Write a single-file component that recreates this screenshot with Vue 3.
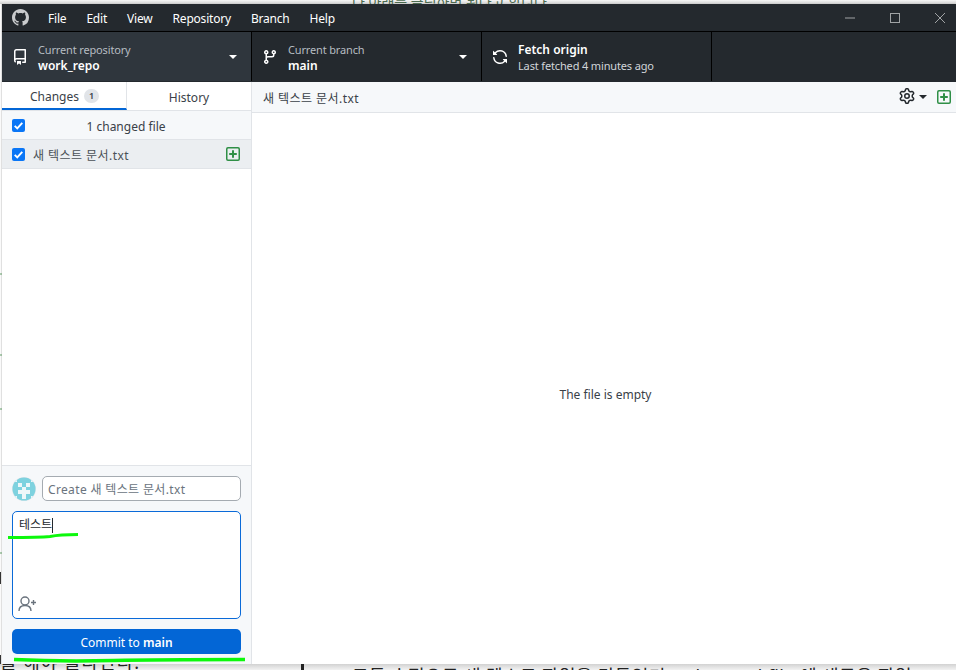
<template>
  <div class="screen">
    <div class="behind-top">
      <span>다 아래를 클릭하면 된다고 합니다</span>
    </div>

    <div class="window">
      <header class="titlebar">
        <svg class="logo" viewBox="0 0 16 16" width="17" height="17">
          <path fill="#c9cbcd" d="M8 0C3.58 0 0 3.58 0 8c0 3.54 2.29 6.53 5.47 7.59.4.07.55-.17.55-.38 0-.19-.01-.82-.01-1.49-2.01.37-2.53-.49-2.69-.94-.09-.23-.48-.94-.82-1.13-.28-.15-.68-.52-.01-.53.63-.01 1.08.58 1.23.82.72 1.21 1.87.87 2.33.66.07-.52.28-.87.51-1.07-1.78-.2-3.64-.89-3.64-3.95 0-.87.31-1.59.82-2.15-.08-.2-.36-1.02.08-2.12 0 0 .67-.21 2.2.82.64-.18 1.32-.27 2-.27s1.36.09 2 .27c1.53-1.04 2.2-.82 2.2-.82.44 1.1.16 1.92.08 2.12.51.56.82 1.27.82 2.15 0 3.07-1.87 3.75-3.65 3.95.29.25.54.73.54 1.48 0 1.07-.01 1.93-.01 2.2 0 .21.15.46.55.38A8.01 8.01 0 0 0 16 8c0-4.42-3.58-8-8-8z"/>
        </svg>
        <nav class="menu">
          <span v-for="item in menuItems" :key="item">{{ item }}</span>
        </nav>
        <div class="win-controls">
          <svg viewBox="0 0 10 10" width="10" height="10"><path d="M0 5h10" stroke="#a0a3a5" fill="none"/></svg>
          <svg viewBox="0 0 10 10" width="10" height="10"><rect x=".5" y=".5" width="9" height="9" stroke="#a0a3a5" fill="none"/></svg>
          <svg viewBox="0 0 10 10" width="10" height="10"><path d="M0 0l10 10M10 0L0 10" stroke="#a0a3a5" fill="none"/></svg>
        </div>
      </header>

      <section class="toolbar">
        <div class="tool repo">
          <svg class="tool-icon" viewBox="0 0 16 16" width="16" height="16">
            <path fill="#fff" d="M2 2.5A2.5 2.5 0 0 1 4.5 0h8.75a.75.75 0 0 1 .75.75v12.5a.75.75 0 0 1-.75.75h-2.5a.75.75 0 0 1 0-1.5h1.75v-2h-8a1 1 0 0 0-.714 1.7.75.75 0 1 1-1.072 1.05A2.495 2.495 0 0 1 2 11.5Zm10.5-1h-8a1 1 0 0 0-1 1v6.708A2.486 2.486 0 0 1 4.5 9h8ZM5 12.25a.25.25 0 0 1 .25-.25h3.5a.25.25 0 0 1 .25.25v3.25a.25.25 0 0 1-.4.2l-1.45-1.087a.249.249 0 0 0-.3 0L5.4 15.7a.25.25 0 0 1-.4-.2Z"/>
          </svg>
          <div class="tool-text">
            <span class="tool-label">Current repository</span>
            <strong>work_repo</strong>
          </div>
          <i class="caret light"></i>
        </div>
        <div class="tool branch">
          <svg class="tool-icon" viewBox="0 0 16 16" width="16" height="16">
            <path fill="#fff" d="M9.5 3.25a2.25 2.25 0 1 1 3 2.122V6A2.5 2.5 0 0 1 10 8.5H6a1 1 0 0 0-1 1v1.128a2.251 2.251 0 1 1-1.5 0V5.372a2.25 2.25 0 1 1 1.5 0v1.836A2.493 2.493 0 0 1 6 7h4a1 1 0 0 0 1-1v-.628A2.25 2.25 0 0 1 9.5 3.25Zm-6 0a.75.75 0 1 0 1.5 0 .75.75 0 0 0-1.5 0Zm8.25-.75a.75.75 0 1 0 0 1.5.75.75 0 0 0 0-1.5ZM4.25 12a.75.75 0 1 0 0 1.5.75.75 0 0 0 0-1.5Z"/>
          </svg>
          <div class="tool-text">
            <span class="tool-label">Current branch</span>
            <strong>main</strong>
          </div>
          <i class="caret light"></i>
        </div>
        <div class="tool fetch">
          <svg class="tool-icon" viewBox="0 0 16 16" width="16" height="16">
            <path fill="#fff" d="M1.705 8.005a.75.75 0 0 1 .834.656 5.5 5.5 0 0 0 9.592 2.97l-1.204-1.204a.25.25 0 0 1 .177-.427h3.646a.25.25 0 0 1 .25.25v3.646a.25.25 0 0 1-.427.177l-1.38-1.38A7.002 7.002 0 0 1 1.05 8.84a.75.75 0 0 1 .656-.834ZM8 2.5a5.487 5.487 0 0 0-4.131 1.869l1.204 1.204A.25.25 0 0 1 4.896 6H1.25A.25.25 0 0 1 1 5.75V2.104a.25.25 0 0 1 .427-.177l1.38 1.38A7.002 7.002 0 0 1 14.95 7.16a.75.75 0 0 1-1.49.178A5.5 5.5 0 0 0 8 2.5Z"/>
          </svg>
          <div class="tool-text">
            <strong class="fetch-title">Fetch origin</strong>
            <span class="tool-label">Last fetched 4 minutes ago</span>
          </div>
        </div>
      </section>

      <main class="body">
        <aside class="sidebar">
          <div class="tabs">
            <div class="tab active"><span class="tab-label">Changes</span> <span class="count">1</span></div>
            <div class="tab"><span class="tab-label">History</span></div>
          </div>
          <div class="changes-head">
            <span class="check"><svg viewBox="0 0 16 16" width="11" height="11"><path d="M2.5 8.5l3.7 3.7 7.3-8" stroke="#fff" stroke-width="2.8" fill="none"/></svg></span>
            <span class="changes-count">1 changed file</span>
          </div>
          <div class="file-row">
            <span class="check"><svg viewBox="0 0 16 16" width="11" height="11"><path d="M2.5 8.5l3.7 3.7 7.3-8" stroke="#fff" stroke-width="2.8" fill="none"/></svg></span>
            <span class="file-name">새 텍스트 문서.txt</span>
            <svg class="added" viewBox="0 0 14 14" width="14" height="14">
              <rect x=".75" y=".75" width="12.5" height="12.5" rx="1.2" fill="none" stroke="#2f8f46" stroke-width="1.5"/>
              <path d="M7 3.2v7.6M3.2 7h7.6" stroke="#2f8f46" stroke-width="2"/>
            </svg>
          </div>
          <div class="file-list"></div>
          <div class="commit">
            <div class="summary-row">
              <svg class="avatar" viewBox="0 0 24 24" width="24" height="24">
                <defs><clipPath id="avatar-clip"><circle cx="12" cy="12" r="11.500"/></clipPath></defs>
                <circle cx="12" cy="12" r="12" fill="#e4e7ea"/>
                <g clip-path="url(#avatar-clip)">
                  <rect width="24" height="24" fill="#7ed2df"/>
                  <path fill="#eef7f9" d="M0 0h5v5H0zM19 0h5v5h-5zM6 6h4v4H6zM14 6h4v4h-4zM10 10h4v3h4v4h-4v5h-4v-5H6v-4h4zM0 19h5v5H0zM19 19h5v5h-5z"/>
                </g>
              </svg>
              <div class="summary">Create 새 텍스트 문서.txt</div>
            </div>
            <div class="description">
              <div class="desc-text">테스트<i class="cursor"></i></div>
              <svg class="coauthor" viewBox="0 0 20 18" width="20" height="18">
                <circle cx="7" cy="6" r="4" fill="none" stroke="#6a737d" stroke-width="1.4"/>
                <path d="M1 16c0-3.6 2.6-5.5 6-5.5s6 1.900 6 5.500M15.500 5v5M13 7.500h5" fill="none" stroke="#6a737d" stroke-width="1.4"/>
              </svg>
            </div>
            <button class="commit-btn">Commit to <b>main</b></button>
          </div>
        </aside>

        <section class="diff">
          <div class="diff-head">
            <span class="diff-file">새 텍스트 문서.txt</span>
            <svg class="gear" viewBox="0 0 16 16" width="16" height="16">
              <path fill="#24292e" d="M8 0a8.200 8.200 0 0 1 .701.031C9.444.095 9.990.645 10.160 1.290l.288 1.107c.018.066.079.158.212.224.231.114.454.243.668.386.123.082.233.090.299.071l1.103-.303c.644-.176 1.392.021 1.820.630.270.385.506.792.704 1.218.315.675.110 1.422-.364 1.891l-.814.806c-.049.048-.098.147-.088.294.016.257.016.515 0 .772-.010.147.038.246.088.294l.814.806c.474.469.679 1.216.364 1.891a7.977 7.977 0 0 1-.704 1.217c-.428.610-1.176.807-1.820.630l-1.102-.302c-.067-.019-.177-.011-.300.071a5.909 5.909 0 0 1-.668.386c-.133.066-.194.158-.211.224l-.290 1.106c-.168.646-.715 1.196-1.458 1.260a8.006 8.006 0 0 1-1.402 0c-.743-.064-1.289-.614-1.458-1.260l-.289-1.106c-.018-.066-.079-.158-.212-.224a5.738 5.738 0 0 1-.668-.386c-.123-.082-.233-.090-.299-.071l-1.103.303c-.644.176-1.392-.021-1.820-.630a8.120 8.120 0 0 1-.704-1.218c-.315-.675-.110-1.422.363-1.891l.815-.806c.050-.048.098-.147.088-.294a6.214 6.214 0 0 1 0-.772c.010-.147-.038-.246-.088-.294l-.815-.806C.635 6.045.430 5.298.746 4.623a7.920 7.920 0 0 1 .704-1.217c.428-.610 1.176-.807 1.820-.630l1.102.302c.067.019.177.011.300-.071.214-.143.437-.272.668-.386.133-.066.194-.158.211-.224l.290-1.106C6.009.645 6.556.095 7.299.030 7.530.010 7.764 0 8 0Zm-.571 1.525c-.036.003-.108.036-.137.146l-.289 1.105c-.147.561-.549.967-.998 1.189-.173.086-.340.183-.500.290-.417.278-.970.423-1.529.270l-1.103-.303c-.109-.030-.175.016-.195.045-.220.312-.412.644-.573.990-.014.031-.021.110.059.190l.815.806c.411.406.562.957.530 1.456a4.709 4.709 0 0 0 0 .582c.032.499-.119 1.050-.530 1.456l-.815.806c-.081.080-.073.159-.059.190.162.346.353.677.573.989.020.030.085.076.195.046l1.102-.303c.560-.153 1.113-.008 1.530.270.161.107.328.204.501.290.447.222.850.629.997 1.189l.289 1.105c.029.109.101.143.137.146a6.600 6.600 0 0 0 1.142 0c.036-.003.108-.036.137-.146l.289-1.105c.147-.561.549-.967.998-1.189.173-.086.340-.183.500-.290.417-.278.970-.423 1.529-.270l1.103.303c.109.029.175-.016.195-.045.220-.313.411-.644.573-.990.014-.031.021-.110-.059-.190l-.815-.806c-.411-.406-.562-.957-.530-1.456a4.709 4.709 0 0 0 0-.582c-.032-.499.119-1.050.530-1.456l.815-.806c.081-.080.073-.159.059-.190a6.464 6.464 0 0 0-.573-.989c-.020-.030-.085-.076-.195-.046l-1.102.303c-.560.153-1.113.008-1.530-.270a4.440 4.440 0 0 0-.501-.290c-.447-.222-.850-.629-.997-1.189l-.289-1.105c-.029-.110-.101-.143-.137-.146a6.600 6.600 0 0 0-1.142 0ZM11 8a3 3 0 1 1-6 0 3 3 0 0 1 6 0ZM9.500 8a1.500 1.500 0 1 0-3.001.001A1.500 1.500 0 0 0 9.500 8Z"/>
            </svg>
            <i class="caret dark"></i>
            <svg class="added head-added" viewBox="0 0 14 14" width="14" height="14">
              <rect x=".75" y=".75" width="12.5" height="12.5" rx="1.2" fill="none" stroke="#2f8f46" stroke-width="1.5"/>
              <path d="M7 3.2v7.6M3.2 7h7.600" stroke="#2f8f46" stroke-width="2"/>
            </svg>
          </div>
          <div class="diff-empty">The file is empty</div>
        </section>
      </main>
    </div>

    <div class="behind-bottom">
      <span class="under-left">을 해야 올라간다.</span>
      <i class="under-bar"></i>
      <span class="under-right">모든 수정으로 새 텍스트 파일을 만들었기 1 changed file 에 새로운 파일</span>
    </div>

    <!-- marker lines drawn on top of the screenshot -->
    <svg class="marks" viewBox="0 0 956 670" width="956" height="670">
      <path d="M8 537.500c20 0 32 0 42-1 10-2 16-2 28-2" stroke="#0cf80c" stroke-width="3" fill="none"/>
      <path d="M14 659.500c40 2 60 2 100 1s90-1 131-1" stroke="#0cf80c" stroke-width="3.500" fill="none"/>
      <path d="M0 274h2M0 355h2M0 409h2M0 553h2" stroke="#5d9a63" fill="none"/>
      <path d="M.5 572v12M.5 655v9" stroke="#333" fill="none"/>
    </svg>
  </div>
</template>

<script setup>
const menuItems = ['File', 'Edit', 'View', 'Repository', 'Branch', 'Help']
</script>

<style>
html, body {
  margin: 0;
  background: #fff;
}
</style>

<style scoped>
.screen {
  position: relative;
  width: 956px;
  height: 670px;
  overflow: hidden;
  background: #fff;
  font-family: "Noto Sans", "Noto Sans CJK KR", sans-serif;
  font-size: 12px;
  color: #24292e;
}

.behind-top {
  height: 4px;
  background: linear-gradient(#f6f6f6, #cfcfcf);
  overflow: hidden;
  display: flex;
  padding-left: 352px;
  align-items: flex-end;
  font-size: 14px;
  line-height: 4px;
  color: #4c6b50;
}

.window {
  height: 660px;
  margin-left: 2px;
  display: flex;
  flex-direction: column;
  background: #fff;
  box-shadow: -1px 0 1px rgba(0, 0, 0, .12);
}

.titlebar {
  height: 27px;
  background: #24292e;
  border-bottom: 1px solid #000;
  display: flex;
  align-items: center;
  color: #fff;
  flex: none;
}

.logo {
  margin-left: 10px;
}

.menu {
  display: flex;
  margin-left: 9px;
  padding-top: 1px;
}

.menu span {
  padding: 0 10px;
  font-size: 12px;
  letter-spacing: -.2px;
}

.win-controls {
  margin-left: auto;
  display: flex;
  gap: 35px;
  padding: 1px 11px 0 0;
}

.toolbar {
  height: 50px;
  display: flex;
  background: #24292e;
  flex: none;
}

.tool {
  display: flex;
  align-items: center;
  border-right: 1px solid #000;
  color: #fff;
  box-sizing: border-box;
  height: 49px;
}

.repo {
  width: 250px;
  background: #2f363d;
  padding-left: 10px;
}

.branch,
.fetch {
  width: 230px;
  padding-left: 10px;
}

.tool-icon {
  flex: none;
  margin-right: 10px;
}

.tool-text {
  display: flex;
  flex-direction: column;
  line-height: 16px;
  flex: 1;
  padding-top: 2px;
}

.tool-label {
  font-size: 11px;
  letter-spacing: -.15px;
  color: #b6bcc2;
}

.tool strong {
  font-size: 12px;
  font-weight: 600;
}

.tool-text .fetch-title {
  font-size: 12px;
}

.fetch .tool-label {
  color: #d1d5da;
}

.caret {
  display: block;
  width: 0;
  height: 0;
  border-left: 4px solid transparent;
  border-right: 4px solid transparent;
  border-top: 4px solid #fff;
}

.caret.light {
  margin-right: 14px;
}

.caret.dark {
  margin: 0 10px 0 4px;
  border-top-color: #24292e;
}

.body {
  flex: 1;
  display: flex;
  min-height: 0;
}

.sidebar {
  width: 250px;
  flex: none;
  display: flex;
  flex-direction: column;
  border-right: 1px solid #e1e4e8;
  box-sizing: border-box;
}

.tabs {
  display: flex;
  height: 29px;
  box-sizing: border-box;
  border-bottom: 1px solid #e1e4e8;
  flex: none;
}

.tab {
  flex: 1;
  display: flex;
  align-items: center;
  justify-content: center;
  gap: 5px;
  box-sizing: border-box;
  font-size: 12px;
  color: #3a4148;
}

.tab-label {
  padding-top: 2px;
}

.tab.active {
  border-right: 1px solid #e1e4e8;
  border-bottom: 2px solid #0366d6;
  flex: 0 0 125px;
  height: 28px;
  padding-left: 1px;
}

.count {
  width: 15px;
  height: 14px;
  margin-top: 2px;
  border-radius: 7px;
  background: #e1e4e8;
  font-size: 9px;
  font-weight: 600;
  line-height: 14px;
  text-align: center;
}

.changes-head {
  height: 29px;
  background: #f6f8fa;
  display: flex;
  align-items: center;
  padding-left: 10px;
  border-bottom: 1px solid #e1e4e8;
  box-sizing: border-box;
  flex: none;
}

.changes-count {
  flex: 1;
  text-align: center;
  padding: 2px 24px 0 0;
  color: #3a4148;
}

.check {
  width: 13px;
  height: 13px;
  background: #0a76f6;
  border-radius: 2px;
  display: flex;
  align-items: center;
  justify-content: center;
  flex: none;
}

.file-row {
  height: 29px;
  background: #ebeef1;
  border-bottom: 1px solid #e1e4e8;
  box-sizing: border-box;
  display: flex;
  align-items: center;
  padding: 0 11px 0 10px;
  flex: none;
}

.file-name {
  margin-left: 8px;
  flex: 1;
  letter-spacing: .45px;
  color: #4a5157;
  padding-top: 2px;
}

.file-list {
  flex: 1;
}

.commit {
  height: 199px;
  box-sizing: border-box;
  flex: none;
  background: #f6f8fa;
  border-top: 1px solid #e1e4e8;
  padding: 10px 10px 10px;
}

.summary-row {
  display: flex;
  align-items: center;
  gap: 6px;
  height: 25px;
}

.avatar {
  flex: none;
}

.summary {
  flex: 1;
  height: 25px;
  box-sizing: border-box;
  border: 1px solid #a5abb1;
  border-radius: 5px;
  background: #fff;
  color: #6a737d;
  padding-left: 5px;
  letter-spacing: .35px;
  line-height: 25px;
}

.description {
  position: relative;
  height: 108px;
  box-sizing: border-box;
  margin-top: 10px;
  background: #fff;
  border: 1.5px solid #0a6ad8;
  border-radius: 5px;
  padding: 4px 6px;
}

.desc-text {
  line-height: 18px;
  color: #24292e;
  display: flex;
  align-items: center;
}

.cursor {
  display: block;
  width: 1px;
  height: 15px;
  background: #24292e;
}

.coauthor {
  position: absolute;
  left: 5px;
  bottom: 5px;
}

.commit-btn {
  display: block;
  width: 100%;
  height: 25px;
  margin-top: 10px;
  border: none;
  border-radius: 5px;
  background: #0366d6;
  color: #fff;
  font: inherit;
  font-size: 12px;
  padding: 2px 0 0;
}

.commit-btn b {
  font-weight: 600;
}

.diff {
  flex: 1;
  display: flex;
  flex-direction: column;
  min-width: 0;
}

.diff-head {
  height: 31px;
  box-sizing: border-box;
  flex: none;
  background: #f6f8fa;
  border-bottom: 1px solid #e1e4e8;
  display: flex;
  align-items: center;
  padding: 0 5px 0 11px;
}

.diff-file {
  flex: 1;
  letter-spacing: .45px;
  color: #3a4148;
  padding-top: 2px;
}

.gear {
  margin-top: -2px;
}

.diff-empty {
  flex: 1;
  display: flex;
  align-items: center;
  justify-content: center;
  padding-top: 12px;
  padding-left: 3px;
  color: #3a4148;
}

.behind-bottom {
  height: 6px;
  position: relative;
  overflow: hidden;
  background: linear-gradient(#d2d2d2, #f2f2f2);
  font-size: 18px;
  line-height: 20px;
  color: #222;
}

.under-left {
  position: absolute;
  left: 0;
  top: -12px;
  letter-spacing: 1px;
}

.under-bar {
  position: absolute;
  left: 301px;
  top: 0;
  width: 3px;
  height: 6px;
  background: #222;
}

.under-right {
  position: absolute;
  left: 352px;
  top: 2px;
  white-space: nowrap;
  letter-spacing: .4px;
}

.marks {
  position: absolute;
  left: 0;
  top: 0;
  pointer-events: none;
}
</style>
